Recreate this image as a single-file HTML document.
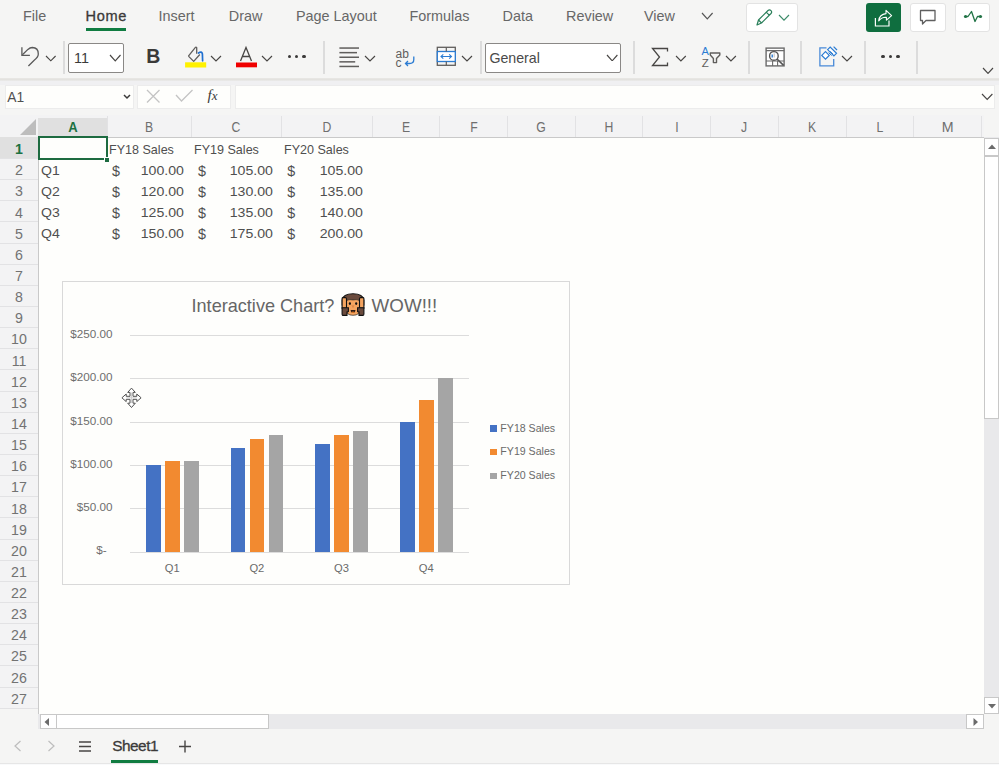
<!DOCTYPE html><html><head><meta charset="utf-8"><style>
html,body{margin:0;padding:0;width:999px;height:765px;overflow:hidden;background:#f5f5f4;font-family:"Liberation Sans", sans-serif;}
.t{position:absolute;white-space:nowrap;}
.r{position:absolute;box-sizing:border-box;}
</style></head><body>
<div class="t" style="left:23.09px;top:8.70px;font-size:14.4px;line-height:14.4px;color:#676767;font-weight:normal;">File</div>
<div class="t" style="left:158.49px;top:8.70px;font-size:14.4px;line-height:14.4px;color:#676767;font-weight:normal;">Insert</div>
<div class="t" style="left:228.79px;top:8.70px;font-size:14.4px;line-height:14.4px;color:#676767;font-weight:normal;">Draw</div>
<div class="t" style="left:295.99px;top:8.70px;font-size:14.4px;line-height:14.4px;color:#676767;font-weight:normal;">Page Layout</div>
<div class="t" style="left:409.39px;top:8.70px;font-size:14.4px;line-height:14.4px;color:#676767;font-weight:normal;">Formulas</div>
<div class="t" style="left:502.59px;top:8.70px;font-size:14.4px;line-height:14.4px;color:#676767;font-weight:normal;">Data</div>
<div class="t" style="left:566.09px;top:8.70px;font-size:14.4px;line-height:14.4px;color:#676767;font-weight:normal;">Review</div>
<div class="t" style="left:643.99px;top:8.70px;font-size:14.4px;line-height:14.4px;color:#676767;font-weight:normal;">View</div>
<div class="t" style="left:85.58px;top:8.66px;font-size:14.6px;line-height:14.6px;color:#3b3a39;font-weight:normal;-webkit-text-stroke:0.3px #3b3a39;letter-spacing:0.6px;">Home</div>
<div class="r" style="left:86px;top:28px;width:40px;height:3px;background:#107c41;"></div>
<svg class="r" style="left:701.4px;top:12.2px" width="12.6" height="8" viewBox="0 0 12.6 8"><path d="M1 1 L6.3 7 L11.6 1" fill="none" stroke="#555" stroke-width="1.15"/></svg>
<div class="r" style="left:746px;top:3px;width:52px;height:29px;background:#fff;border:1px solid #e3e3e3;border-radius:3px;"></div>
<svg class="r" style="left:754px;top:8px" width="20" height="20" viewBox="0 0 20 20"><path d="M3 17 L4.5 12 L14 2.5 Q15.5 1.2 17 2.6 Q18.3 4 17 5.5 L7.5 15 Z M4.5 12 L7.5 15 M12.3 4.2 L15.4 7.3" fill="none" stroke="#2a7f5a" stroke-width="1.2" stroke-linejoin="round"/></svg>
<svg class="r" style="left:777.8px;top:14px" width="12" height="7.2" viewBox="0 0 12 7.2"><path d="M1 1 L6.0 6.2 L11 1" fill="none" stroke="#3d8c6a" stroke-width="1.15"/></svg>
<div class="r" style="left:866px;top:3px;width:35px;height:29px;background:#0f6e3f;border-radius:3px;"></div>
<svg class="r" style="left:873px;top:8px" width="20" height="20" viewBox="0 0 20 20"><path d="M2.4 10 V18 H16 V12.5" fill="none" stroke="#fff" stroke-width="1.2"/><path d="M5.7 12.8 Q6.5 6.2 13 5.6 V2.3 L18.6 7.6 L13.4 12.2 V9.2 Q8.5 9 5.7 12.8 Z" fill="none" stroke="#fff" stroke-width="1.1" stroke-linejoin="round"/></svg>
<div class="r" style="left:910px;top:3px;width:36px;height:29px;background:#fff;border:1px solid #e3e3e3;border-radius:3px;"></div>
<svg class="r" style="left:919px;top:9px" width="18" height="17" viewBox="0 0 18 17"><path d="M1.5 1.5 H16 V11.5 H7 L3.5 15 V11.5 H1.5 Z" fill="none" stroke="#5f5f5f" stroke-width="1.3" stroke-linejoin="round"/></svg>
<div class="r" style="left:955px;top:3px;width:35px;height:29px;background:#fff;border:1px solid #e3e3e3;border-radius:3px;"></div>
<svg class="r" style="left:963px;top:10px" width="20" height="13" viewBox="0 0 20 13"><path d="M2 6.5 H5 L8.5 1.5 L12 11.5 L14.5 6.5 H18" fill="none" stroke="#217346" stroke-width="1.3" stroke-linejoin="round"/><circle cx="2.5" cy="6.5" r="1.6" fill="#217346"/><circle cx="17.5" cy="6.5" r="1.6" fill="#217346"/></svg>
<svg class="r" style="left:19px;top:45px" width="22" height="23" viewBox="0 0 22 23"><path d="M2.9 2.2 V10.4 H10.9" fill="none" stroke="#5a5a5a" stroke-width="1.3"/><path d="M3.4 9.7 L8.9 4.4 Q11 2.5 13.3 2.5 Q19.3 2.7 19.3 8.9 Q19.3 12 15.2 15.2 L9.4 21" fill="none" stroke="#5a5a5a" stroke-width="1.3"/></svg>
<svg class="r" style="left:44.7px;top:55px" width="11.6" height="6.8" viewBox="0 0 11.6 6.8"><path d="M1 1 L5.8 5.8 L10.6 1" fill="none" stroke="#484644" stroke-width="1.15"/></svg>
<div class="r" style="left:63px;top:41px;width:1.5px;height:33px;background:#dcdcdc;"></div>
<div class="r" style="left:322.5px;top:41px;width:2px;height:33px;background:#dcdcdc;"></div>
<div class="r" style="left:480px;top:41px;width:1.5px;height:33px;background:#dcdcdc;"></div>
<div class="r" style="left:633px;top:41px;width:1.5px;height:33px;background:#dcdcdc;"></div>
<div class="r" style="left:748px;top:41px;width:1.5px;height:33px;background:#dcdcdc;"></div>
<div class="r" style="left:800px;top:41px;width:1.5px;height:33px;background:#dcdcdc;"></div>
<div class="r" style="left:864px;top:41px;width:1.5px;height:33px;background:#dcdcdc;"></div>
<div class="r" style="left:916px;top:41px;width:1.5px;height:33px;background:#dcdcdc;"></div>
<div class="r" style="left:68px;top:43px;width:56px;height:30px;background:#fff;border:1px solid #8a8886;border-radius:2px;"></div>
<div class="t" style="left:73.99px;top:50.80px;font-size:14.4px;line-height:14.4px;color:#3b3a39;font-weight:normal;">11</div>
<svg class="r" style="left:108.7px;top:53.5px" width="12.5" height="8" viewBox="0 0 12.5 8"><path d="M1 1 L6.25 7 L11.5 1" fill="none" stroke="#484644" stroke-width="1.15"/></svg>
<div class="t" style="left:146.23px;top:47.28px;font-size:19.5px;line-height:19.5px;color:#3b3a39;font-weight:bold;">B</div>
<svg class="r" style="left:182px;top:42px" width="26" height="28" viewBox="0 0 26 28"><path d="M6.4 14.1 L13.2 5.6 Q14 4.6 14.7 5.6 L14.7 11.8 M6.4 14.1 L11.7 19.4 L17.8 12.5" fill="none" stroke="#605e5c" stroke-width="1.3" stroke-linejoin="round"/><path d="M16.5 11 Q19.8 8.8 20.4 12 L20.6 18.8" fill="none" stroke="#1f6fd0" stroke-width="1.7" stroke-linecap="round"/><rect x="3.1" y="20.3" width="21.1" height="5.2" fill="#fff100"/></svg>
<svg class="r" style="left:210.3px;top:54.9px" width="12" height="6.9" viewBox="0 0 12 6.9"><path d="M1 1 L6.0 5.9 L11 1" fill="none" stroke="#484644" stroke-width="1.15"/></svg>
<svg class="r" style="left:234px;top:45px" width="25" height="24" viewBox="0 0 25 24"><path d="M6.5 16 L12 2.5 L17.5 16 M8.3 11.5 H15.7" fill="none" stroke="#484644" stroke-width="1.3"/><rect x="2" y="17.5" width="21" height="4.8" fill="#f00000"/></svg>
<svg class="r" style="left:261px;top:54.9px" width="12" height="6.9" viewBox="0 0 12 6.9"><path d="M1 1 L6.0 5.9 L11 1" fill="none" stroke="#484644" stroke-width="1.15"/></svg>
<div class="r" style="left:287.9px;top:55px;width:3.2px;height:3.2px;background:#3b3a39;border-radius:50%;"></div>
<div class="r" style="left:295.2px;top:55px;width:3.2px;height:3.2px;background:#3b3a39;border-radius:50%;"></div>
<div class="r" style="left:302.4px;top:55px;width:3.2px;height:3.2px;background:#3b3a39;border-radius:50%;"></div>
<svg class="r" style="left:338px;top:46px" width="24" height="22" viewBox="0 0 24 22"><rect x="1.4" y="1.3" width="19.6" height="1.5" fill="#605e5c"/><rect x="1.4" y="5.9" width="17.6" height="1.5" fill="#605e5c"/><rect x="1.4" y="10.5" width="19.6" height="1.5" fill="#605e5c"/><rect x="1.4" y="15.1" width="15.8" height="1.5" fill="#605e5c"/><rect x="1.4" y="19.7" width="19.6" height="1.5" fill="#605e5c"/></svg>
<svg class="r" style="left:363.8px;top:54.9px" width="12" height="6.9" viewBox="0 0 12 6.9"><path d="M1 1 L6.0 5.9 L11 1" fill="none" stroke="#484644" stroke-width="1.15"/></svg>
<svg class="r" style="left:394px;top:46px" width="24" height="24" viewBox="0 0 24 24"><text x="1.6" y="11.5" font-family="Liberation Sans" font-size="12" fill="#605e5c">ab</text><text x="1.6" y="21" font-family="Liberation Sans" font-size="12" fill="#605e5c">c</text><path d="M19.8 10.5 V13.5 Q19.8 17.5 15.5 17.5 H11.5 M14 15 L11.5 17.5 L14 20" fill="none" stroke="#2b7cd3" stroke-width="1.3"/></svg>
<svg class="r" style="left:436px;top:46px" width="22" height="21" viewBox="0 0 22 21"><rect x="1.3" y="1.3" width="18" height="18" fill="none" stroke="#605e5c" stroke-width="1.3"/><rect x="1.3" y="5.5" width="18" height="10" fill="#fff" stroke="#2b7cd3" stroke-width="1.3"/><path d="M5 10.5 H15.5 M7.3 8.3 L5 10.5 L7.3 12.7 M13.2 8.3 L15.5 10.5 L13.2 12.7" fill="none" stroke="#2b7cd3" stroke-width="1.1"/><path d="M10.3 1.3 V5.5 M10.3 15.5 V19.3" stroke="#605e5c" stroke-width="1.2"/></svg>
<svg class="r" style="left:461.2px;top:54.9px" width="12" height="6.9" viewBox="0 0 12 6.9"><path d="M1 1 L6.0 5.9 L11 1" fill="none" stroke="#484644" stroke-width="1.15"/></svg>
<div class="r" style="left:485px;top:43px;width:136px;height:30px;background:#fff;border:1px solid #8a8886;border-radius:2px;"></div>
<div class="t" style="left:489.41px;top:50.73px;font-size:14.2px;line-height:14.2px;color:#4a4a4a;font-weight:normal;">General</div>
<svg class="r" style="left:605.6px;top:53.6px" width="12.4" height="7.8" viewBox="0 0 12.4 7.8"><path d="M1 1 L6.2 6.8 L11.4 1" fill="none" stroke="#484644" stroke-width="1.15"/></svg>
<svg class="r" style="left:650px;top:47px" width="20" height="20" viewBox="0 0 20 20"><path d="M17.5 4.5 V1.5 H2.5 L9.5 10 L2.5 18.5 H17.5 V15.5" fill="none" stroke="#484644" stroke-width="1.3" stroke-linejoin="miter"/></svg>
<svg class="r" style="left:674.8px;top:54.9px" width="11.8" height="6.9" viewBox="0 0 11.8 6.9"><path d="M1 1 L5.9 5.9 L10.8 1" fill="none" stroke="#484644" stroke-width="1.15"/></svg>
<svg class="r" style="left:696px;top:42px" width="28" height="28" viewBox="0 0 28 28"><text x="5.6" y="13.2" font-family="Liberation Sans" font-size="11" fill="#2b7cd3">A</text><text x="5.8" y="24.7" font-family="Liberation Sans" font-size="11.5" fill="#605e5c">Z</text><path d="M14.3 11 H23.8 V13 L20.5 16.5 V20.6 H17.4 V16.5 L14.3 13 Z" fill="none" stroke="#605e5c" stroke-width="1.4" stroke-linejoin="round"/></svg>
<svg class="r" style="left:725.2px;top:54.9px" width="11.9" height="6.9" viewBox="0 0 11.9 6.9"><path d="M1 1 L5.95 5.9 L10.9 1" fill="none" stroke="#484644" stroke-width="1.15"/></svg>
<svg class="r" style="left:760px;top:42px" width="28" height="28" viewBox="0 0 28 28"><rect x="6.1" y="6.1" width="18" height="17.8" fill="#fff" stroke="#6b6b6b" stroke-width="1.4"/><path d="M6 8.6 H24.2 M6 19 H24.2 M12.6 19 V24 M17.6 19 V24" stroke="#6b6b6b" stroke-width="1.1"/><circle cx="13.9" cy="13.9" r="4.3" fill="#fff" stroke="#555" stroke-width="1.4"/><rect x="11.5" y="12.5" width="1.4" height="3" fill="#2b7cd3"/><rect x="13.6" y="11.3" width="1.2" height="4.2" fill="#c8c8c8"/><path d="M17 17 L23.6 23.3" stroke="#555" stroke-width="1.6"/></svg>
<svg class="r" style="left:814px;top:42px" width="28" height="28" viewBox="0 0 28 28"><path d="M12.5 5.9 H5.9 V23.9 H19.7 V17" fill="none" stroke="#4a8ad8" stroke-width="1.3"/><path d="M7.8 13.4 L11.5 9.7 L15.2 13.4 L11.5 17.1 Z" fill="#fff" stroke="#2b7cd3" stroke-width="1.2" transform="rotate(0)"/><path d="M13.6 7.6 L16.2 5 L22.5 11.3 L19.9 13.9 Z" fill="#fff" stroke="#2b7cd3" stroke-width="1.2"/><path d="M14.6 10.6 L17.6 13.6 M16 9.2 L19 12.2" stroke="#2b7cd3" stroke-width="1"/><path d="M19.6 4.6 L23 8" stroke="#2b7cd3" stroke-width="1.2"/></svg>
<svg class="r" style="left:841.2px;top:54.9px" width="12" height="6.9" viewBox="0 0 12 6.9"><path d="M1 1 L6.0 5.9 L11 1" fill="none" stroke="#484644" stroke-width="1.15"/></svg>
<div class="r" style="left:881.4px;top:55px;width:3.2px;height:3.2px;background:#3b3a39;border-radius:50%;"></div>
<div class="r" style="left:888.9px;top:55px;width:3.2px;height:3.2px;background:#3b3a39;border-radius:50%;"></div>
<div class="r" style="left:896.4px;top:55px;width:3.2px;height:3.2px;background:#3b3a39;border-radius:50%;"></div>
<svg class="r" style="left:981.6px;top:66.6px" width="12" height="7.4" viewBox="0 0 12 7.4"><path d="M1 1 L6.0 6.4 L11 1" fill="none" stroke="#484644" stroke-width="1.15"/></svg>
<div class="r" style="left:0px;top:78px;width:999px;height:3px;background:linear-gradient(#e9e8e5,#e3e2df 50%,#ebebea);"></div>
<div class="r" style="left:0px;top:81px;width:999px;height:4px;background:#f0f0f2;"></div>
<div class="r" style="left:0px;top:85px;width:999px;height:30px;background:#f5f5f4;"></div>
<div class="r" style="left:5px;top:84.5px;width:129px;height:24px;background:#fefefc;border:1px solid #ececec;"></div>
<div class="t" style="left:7.33px;top:90.79px;font-size:13.8px;line-height:13.8px;color:#505050;font-weight:normal;">A1</div>
<svg class="r" style="left:122.5px;top:93.8px" width="8" height="6" viewBox="0 0 8 6"><path d="M1 1 L4 4 L7 1" fill="none" stroke="#3b3a39" stroke-width="1.5"/></svg>
<div class="r" style="left:137px;top:84.5px;width:94px;height:24px;background:#fefefc;border:1px solid #ececec;"></div>
<svg class="r" style="left:146px;top:89px" width="15" height="15" viewBox="0 0 15 15"><path d="M1 1 L13.5 13.5 M13.5 1 L1 13.5" stroke="#c4c4c4" stroke-width="1.3"/></svg>
<svg class="r" style="left:174.5px;top:89px" width="19" height="14" viewBox="0 0 19 14"><path d="M1 6 L6.5 12 L17.5 1" fill="none" stroke="#c4c4c4" stroke-width="1.3"/></svg>
<div class="t" style="left:207.5px;top:86px;font-family:'Liberation Serif',serif;font-style:italic;font-size:15px;line-height:18px;color:#3b3a39;">f<span style="font-size:13px">x</span></div>
<div class="r" style="left:235px;top:84.5px;width:760px;height:24px;background:#fefefc;border:1px solid #ececec;"></div>
<svg class="r" style="left:980.8px;top:93.3px" width="12.4" height="7.5" viewBox="0 0 12.4 7.5"><path d="M1 1 L6.2 6.5 L11.4 1" fill="none" stroke="#484644" stroke-width="1.15"/></svg>
<div class="r" style="left:0px;top:115px;width:984px;height:22.4px;background:#f3f3f4;"></div>
<div class="r" style="left:38px;top:117.5px;width:69px;height:19.9px;background:#e0e0e0;"></div>
<div class="r" style="left:106.5px;top:116px;width:1px;height:21.4px;background:#e2e2e4;"></div>
<div class="r" style="left:190.5px;top:116px;width:1px;height:21.4px;background:#e2e2e4;"></div>
<div class="r" style="left:281.1px;top:116px;width:1px;height:21.4px;background:#e2e2e4;"></div>
<div class="r" style="left:371.5px;top:116px;width:1px;height:21.4px;background:#e2e2e4;"></div>
<div class="r" style="left:439.22px;top:116px;width:1px;height:21.4px;background:#e2e2e4;"></div>
<div class="r" style="left:506.94px;top:116px;width:1px;height:21.4px;background:#e2e2e4;"></div>
<div class="r" style="left:574.66px;top:116px;width:1px;height:21.4px;background:#e2e2e4;"></div>
<div class="r" style="left:642.38px;top:116px;width:1px;height:21.4px;background:#e2e2e4;"></div>
<div class="r" style="left:710.1px;top:116px;width:1px;height:21.4px;background:#e2e2e4;"></div>
<div class="r" style="left:777.8199999999999px;top:116px;width:1px;height:21.4px;background:#e2e2e4;"></div>
<div class="r" style="left:845.54px;top:116px;width:1px;height:21.4px;background:#e2e2e4;"></div>
<div class="r" style="left:913.26px;top:116px;width:1px;height:21.4px;background:#e2e2e4;"></div>
<div class="r" style="left:980.98px;top:116px;width:1px;height:21.4px;background:#e2e2e4;"></div>
<div class="t" style="left:-27.50px;width:200px;text-align:center;top:119.93px;font-size:14.2px;line-height:14.2px;color:#1b7142;font-weight:bold;transform:scaleX(0.92);">A</div>
<div class="t" style="left:49.00px;width:200px;text-align:center;top:119.93px;font-size:14.2px;line-height:14.2px;color:#6f6f6f;font-weight:normal;transform:scaleX(0.86);">B</div>
<div class="t" style="left:136.30px;width:200px;text-align:center;top:119.93px;font-size:14.2px;line-height:14.2px;color:#6f6f6f;font-weight:normal;transform:scaleX(0.86);">C</div>
<div class="t" style="left:226.80px;width:200px;text-align:center;top:119.93px;font-size:14.2px;line-height:14.2px;color:#6f6f6f;font-weight:normal;transform:scaleX(0.86);">D</div>
<div class="t" style="left:305.86px;width:200px;text-align:center;top:119.93px;font-size:14.2px;line-height:14.2px;color:#6f6f6f;font-weight:normal;transform:scaleX(0.86);">E</div>
<div class="t" style="left:373.58px;width:200px;text-align:center;top:119.93px;font-size:14.2px;line-height:14.2px;color:#6f6f6f;font-weight:normal;transform:scaleX(0.86);">F</div>
<div class="t" style="left:441.30px;width:200px;text-align:center;top:119.93px;font-size:14.2px;line-height:14.2px;color:#6f6f6f;font-weight:normal;transform:scaleX(0.86);">G</div>
<div class="t" style="left:509.02px;width:200px;text-align:center;top:119.93px;font-size:14.2px;line-height:14.2px;color:#6f6f6f;font-weight:normal;transform:scaleX(0.86);">H</div>
<div class="t" style="left:576.74px;width:200px;text-align:center;top:119.93px;font-size:14.2px;line-height:14.2px;color:#6f6f6f;font-weight:normal;transform:scaleX(0.86);">I</div>
<div class="t" style="left:644.46px;width:200px;text-align:center;top:119.93px;font-size:14.2px;line-height:14.2px;color:#6f6f6f;font-weight:normal;transform:scaleX(0.86);">J</div>
<div class="t" style="left:712.18px;width:200px;text-align:center;top:119.93px;font-size:14.2px;line-height:14.2px;color:#6f6f6f;font-weight:normal;transform:scaleX(0.86);">K</div>
<div class="t" style="left:779.90px;width:200px;text-align:center;top:119.93px;font-size:14.2px;line-height:14.2px;color:#6f6f6f;font-weight:normal;transform:scaleX(0.86);">L</div>
<div class="t" style="left:847.62px;width:200px;text-align:center;top:119.93px;font-size:14.2px;line-height:14.2px;color:#6f6f6f;font-weight:normal;transform:scaleX(1.0);">M</div>
<svg class="r" style="left:20px;top:118.8px" width="16" height="16" viewBox="0 0 16 16"><path d="M16 0 V16 H0 Z" fill="#bdbdbd"/></svg>
<div class="r" style="left:38px;top:136.6px;width:946px;height:1.2px;background:#c9c9c9;"></div>
<div class="r" style="left:38.5px;top:137.8px;width:945.5px;height:576.5px;background:#fefefc;"></div>
<div class="r" style="left:37.6px;top:137.4px;width:1px;height:577px;background:#c9c9c9;"></div>
<div class="r" style="left:0px;top:137.4px;width:37.6px;height:571px;background:#f3f3f4;"></div>
<div class="r" style="left:0px;top:137.4px;width:37.6px;height:21.14px;background:#e0e0e0;"></div>
<div class="r" style="left:0px;top:158.04px;width:37.6px;height:1px;background:#e2e2e4;"></div>
<div class="t" style="left:-81.00px;width:200px;text-align:center;top:142.03px;font-size:14.2px;line-height:14.2px;color:#1b7142;font-weight:bold;">1</div>
<div class="r" style="left:0px;top:179.18px;width:37.6px;height:1px;background:#e2e2e4;"></div>
<div class="t" style="left:-81.00px;width:200px;text-align:center;top:163.27px;font-size:14.2px;line-height:14.2px;color:#727272;font-weight:normal;">2</div>
<div class="r" style="left:0px;top:200.32px;width:37.6px;height:1px;background:#e2e2e4;"></div>
<div class="t" style="left:-81.00px;width:200px;text-align:center;top:184.41px;font-size:14.2px;line-height:14.2px;color:#727272;font-weight:normal;">3</div>
<div class="r" style="left:0px;top:221.46px;width:37.6px;height:1px;background:#e2e2e4;"></div>
<div class="t" style="left:-81.00px;width:200px;text-align:center;top:205.55px;font-size:14.2px;line-height:14.2px;color:#727272;font-weight:normal;">4</div>
<div class="r" style="left:0px;top:242.6px;width:37.6px;height:1px;background:#e2e2e4;"></div>
<div class="t" style="left:-81.00px;width:200px;text-align:center;top:226.69px;font-size:14.2px;line-height:14.2px;color:#727272;font-weight:normal;">5</div>
<div class="r" style="left:0px;top:263.74px;width:37.6px;height:1px;background:#e2e2e4;"></div>
<div class="t" style="left:-81.00px;width:200px;text-align:center;top:247.83px;font-size:14.2px;line-height:14.2px;color:#727272;font-weight:normal;">6</div>
<div class="r" style="left:0px;top:284.88px;width:37.6px;height:1px;background:#e2e2e4;"></div>
<div class="t" style="left:-81.00px;width:200px;text-align:center;top:268.97px;font-size:14.2px;line-height:14.2px;color:#727272;font-weight:normal;">7</div>
<div class="r" style="left:0px;top:306.02px;width:37.6px;height:1px;background:#e2e2e4;"></div>
<div class="t" style="left:-81.00px;width:200px;text-align:center;top:290.11px;font-size:14.2px;line-height:14.2px;color:#727272;font-weight:normal;">8</div>
<div class="r" style="left:0px;top:327.16px;width:37.6px;height:1px;background:#e2e2e4;"></div>
<div class="t" style="left:-81.00px;width:200px;text-align:center;top:311.25px;font-size:14.2px;line-height:14.2px;color:#727272;font-weight:normal;">9</div>
<div class="r" style="left:0px;top:348.3px;width:37.6px;height:1px;background:#e2e2e4;"></div>
<div class="t" style="left:-81.00px;width:200px;text-align:center;top:332.39px;font-size:14.2px;line-height:14.2px;color:#727272;font-weight:normal;">10</div>
<div class="r" style="left:0px;top:369.44px;width:37.6px;height:1px;background:#e2e2e4;"></div>
<div class="t" style="left:-81.00px;width:200px;text-align:center;top:353.53px;font-size:14.2px;line-height:14.2px;color:#727272;font-weight:normal;">11</div>
<div class="r" style="left:0px;top:390.58px;width:37.6px;height:1px;background:#e2e2e4;"></div>
<div class="t" style="left:-81.00px;width:200px;text-align:center;top:374.67px;font-size:14.2px;line-height:14.2px;color:#727272;font-weight:normal;">12</div>
<div class="r" style="left:0px;top:411.72px;width:37.6px;height:1px;background:#e2e2e4;"></div>
<div class="t" style="left:-81.00px;width:200px;text-align:center;top:395.81px;font-size:14.2px;line-height:14.2px;color:#727272;font-weight:normal;">13</div>
<div class="r" style="left:0px;top:432.86px;width:37.6px;height:1px;background:#e2e2e4;"></div>
<div class="t" style="left:-81.00px;width:200px;text-align:center;top:416.95px;font-size:14.2px;line-height:14.2px;color:#727272;font-weight:normal;">14</div>
<div class="r" style="left:0px;top:454.0px;width:37.6px;height:1px;background:#e2e2e4;"></div>
<div class="t" style="left:-81.00px;width:200px;text-align:center;top:438.09px;font-size:14.2px;line-height:14.2px;color:#727272;font-weight:normal;">15</div>
<div class="r" style="left:0px;top:475.14px;width:37.6px;height:1px;background:#e2e2e4;"></div>
<div class="t" style="left:-81.00px;width:200px;text-align:center;top:459.23px;font-size:14.2px;line-height:14.2px;color:#727272;font-weight:normal;">16</div>
<div class="r" style="left:0px;top:496.28px;width:37.6px;height:1px;background:#e2e2e4;"></div>
<div class="t" style="left:-81.00px;width:200px;text-align:center;top:480.37px;font-size:14.2px;line-height:14.2px;color:#727272;font-weight:normal;">17</div>
<div class="r" style="left:0px;top:517.42px;width:37.6px;height:1px;background:#e2e2e4;"></div>
<div class="t" style="left:-81.00px;width:200px;text-align:center;top:501.51px;font-size:14.2px;line-height:14.2px;color:#727272;font-weight:normal;">18</div>
<div class="r" style="left:0px;top:538.56px;width:37.6px;height:1px;background:#e2e2e4;"></div>
<div class="t" style="left:-81.00px;width:200px;text-align:center;top:522.65px;font-size:14.2px;line-height:14.2px;color:#727272;font-weight:normal;">19</div>
<div class="r" style="left:0px;top:559.7px;width:37.6px;height:1px;background:#e2e2e4;"></div>
<div class="t" style="left:-81.00px;width:200px;text-align:center;top:543.79px;font-size:14.2px;line-height:14.2px;color:#727272;font-weight:normal;">20</div>
<div class="r" style="left:0px;top:580.84px;width:37.6px;height:1px;background:#e2e2e4;"></div>
<div class="t" style="left:-81.00px;width:200px;text-align:center;top:564.93px;font-size:14.2px;line-height:14.2px;color:#727272;font-weight:normal;">21</div>
<div class="r" style="left:0px;top:601.98px;width:37.6px;height:1px;background:#e2e2e4;"></div>
<div class="t" style="left:-81.00px;width:200px;text-align:center;top:586.07px;font-size:14.2px;line-height:14.2px;color:#727272;font-weight:normal;">22</div>
<div class="r" style="left:0px;top:623.12px;width:37.6px;height:1px;background:#e2e2e4;"></div>
<div class="t" style="left:-81.00px;width:200px;text-align:center;top:607.21px;font-size:14.2px;line-height:14.2px;color:#727272;font-weight:normal;">23</div>
<div class="r" style="left:0px;top:644.26px;width:37.6px;height:1px;background:#e2e2e4;"></div>
<div class="t" style="left:-81.00px;width:200px;text-align:center;top:628.35px;font-size:14.2px;line-height:14.2px;color:#727272;font-weight:normal;">24</div>
<div class="r" style="left:0px;top:665.4px;width:37.6px;height:1px;background:#e2e2e4;"></div>
<div class="t" style="left:-81.00px;width:200px;text-align:center;top:649.49px;font-size:14.2px;line-height:14.2px;color:#727272;font-weight:normal;">25</div>
<div class="r" style="left:0px;top:686.54px;width:37.6px;height:1px;background:#e2e2e4;"></div>
<div class="t" style="left:-81.00px;width:200px;text-align:center;top:670.63px;font-size:14.2px;line-height:14.2px;color:#727272;font-weight:normal;">26</div>
<div class="r" style="left:0px;top:707.68px;width:37.6px;height:1px;background:#e2e2e4;"></div>
<div class="t" style="left:-81.00px;width:200px;text-align:center;top:691.77px;font-size:14.2px;line-height:14.2px;color:#727272;font-weight:normal;">27</div>
<div class="r" style="left:37.5px;top:136.4px;width:70px;height:23.6px;border:2px solid #1d6b40;"></div>
<div class="r" style="left:103.8px;top:156.8px;width:6px;height:6px;background:#1d6b40;border:1px solid #fdfdfc;"></div>
<div class="t" style="left:108.86px;top:142.64px;font-size:13.5px;line-height:13.5px;color:#4f4f4f;font-weight:normal;transform:scaleX(0.93);transform-origin:0 0;">FY18 Sales</div>
<div class="t" style="left:194.36px;top:142.64px;font-size:13.5px;line-height:13.5px;color:#4f4f4f;font-weight:normal;transform:scaleX(0.93);transform-origin:0 0;">FY19 Sales</div>
<div class="t" style="left:284.06px;top:142.64px;font-size:13.5px;line-height:13.5px;color:#4f4f4f;font-weight:normal;transform:scaleX(0.93);transform-origin:0 0;">FY20 Sales</div>
<div class="t" style="left:41.26px;top:163.78px;font-size:13.5px;line-height:13.5px;color:#4f4f4f;font-weight:normal;transform:scaleX(1.04);transform-origin:0 0;">Q1</div>
<div class="t" style="left:112.00px;top:164.05px;font-size:14.3px;line-height:14.3px;color:#4f4f4f;font-weight:normal;">$</div>
<div class="t" style="right:814.96px;top:163.80px;font-size:13.4px;line-height:13.4px;color:#4f4f4f;transform:scaleX(1.055);transform-origin:100% 0;">100.00</div>
<div class="t" style="left:198.10px;top:164.05px;font-size:14.3px;line-height:14.3px;color:#4f4f4f;font-weight:normal;">$</div>
<div class="t" style="right:725.86px;top:163.80px;font-size:13.4px;line-height:13.4px;color:#4f4f4f;transform:scaleX(1.055);transform-origin:100% 0;">105.00</div>
<div class="t" style="left:287.20px;top:164.05px;font-size:14.3px;line-height:14.3px;color:#4f4f4f;font-weight:normal;">$</div>
<div class="t" style="right:635.56px;top:163.80px;font-size:13.4px;line-height:13.4px;color:#4f4f4f;transform:scaleX(1.055);transform-origin:100% 0;">105.00</div>
<div class="t" style="left:41.26px;top:184.92px;font-size:13.5px;line-height:13.5px;color:#4f4f4f;font-weight:normal;transform:scaleX(1.04);transform-origin:0 0;">Q2</div>
<div class="t" style="left:112.00px;top:185.19px;font-size:14.3px;line-height:14.3px;color:#4f4f4f;font-weight:normal;">$</div>
<div class="t" style="right:814.96px;top:184.94px;font-size:13.4px;line-height:13.4px;color:#4f4f4f;transform:scaleX(1.055);transform-origin:100% 0;">120.00</div>
<div class="t" style="left:198.10px;top:185.19px;font-size:14.3px;line-height:14.3px;color:#4f4f4f;font-weight:normal;">$</div>
<div class="t" style="right:725.86px;top:184.94px;font-size:13.4px;line-height:13.4px;color:#4f4f4f;transform:scaleX(1.055);transform-origin:100% 0;">130.00</div>
<div class="t" style="left:287.20px;top:185.19px;font-size:14.3px;line-height:14.3px;color:#4f4f4f;font-weight:normal;">$</div>
<div class="t" style="right:635.56px;top:184.94px;font-size:13.4px;line-height:13.4px;color:#4f4f4f;transform:scaleX(1.055);transform-origin:100% 0;">135.00</div>
<div class="t" style="left:41.26px;top:206.06px;font-size:13.5px;line-height:13.5px;color:#4f4f4f;font-weight:normal;transform:scaleX(1.04);transform-origin:0 0;">Q3</div>
<div class="t" style="left:112.00px;top:206.33px;font-size:14.3px;line-height:14.3px;color:#4f4f4f;font-weight:normal;">$</div>
<div class="t" style="right:814.96px;top:206.08px;font-size:13.4px;line-height:13.4px;color:#4f4f4f;transform:scaleX(1.055);transform-origin:100% 0;">125.00</div>
<div class="t" style="left:198.10px;top:206.33px;font-size:14.3px;line-height:14.3px;color:#4f4f4f;font-weight:normal;">$</div>
<div class="t" style="right:725.86px;top:206.08px;font-size:13.4px;line-height:13.4px;color:#4f4f4f;transform:scaleX(1.055);transform-origin:100% 0;">135.00</div>
<div class="t" style="left:287.20px;top:206.33px;font-size:14.3px;line-height:14.3px;color:#4f4f4f;font-weight:normal;">$</div>
<div class="t" style="right:635.56px;top:206.08px;font-size:13.4px;line-height:13.4px;color:#4f4f4f;transform:scaleX(1.055);transform-origin:100% 0;">140.00</div>
<div class="t" style="left:41.26px;top:227.20px;font-size:13.5px;line-height:13.5px;color:#4f4f4f;font-weight:normal;transform:scaleX(1.04);transform-origin:0 0;">Q4</div>
<div class="t" style="left:112.00px;top:227.47px;font-size:14.3px;line-height:14.3px;color:#4f4f4f;font-weight:normal;">$</div>
<div class="t" style="right:814.96px;top:227.22px;font-size:13.4px;line-height:13.4px;color:#4f4f4f;transform:scaleX(1.055);transform-origin:100% 0;">150.00</div>
<div class="t" style="left:198.10px;top:227.47px;font-size:14.3px;line-height:14.3px;color:#4f4f4f;font-weight:normal;">$</div>
<div class="t" style="right:725.86px;top:227.22px;font-size:13.4px;line-height:13.4px;color:#4f4f4f;transform:scaleX(1.055);transform-origin:100% 0;">175.00</div>
<div class="t" style="left:287.20px;top:227.47px;font-size:14.3px;line-height:14.3px;color:#4f4f4f;font-weight:normal;">$</div>
<div class="t" style="right:635.56px;top:227.22px;font-size:13.4px;line-height:13.4px;color:#4f4f4f;transform:scaleX(1.055);transform-origin:100% 0;">200.00</div>
<div class="r" style="left:61.5px;top:280.8px;width:508.3px;height:304.2px;background:#fefefc;border:1px solid #d9d9d9;"></div>
<div class="t" style="left:191.53px;top:296.90px;font-size:18.1px;line-height:18.1px;color:#666666;font-weight:normal;">Interactive Chart?</div>
<div class="t" style="left:371.58px;top:296.79px;font-size:18.8px;line-height:18.8px;color:#666666;font-weight:normal;">WOW!!!</div>
<svg class="r" style="left:341px;top:293px" width="24" height="24" viewBox="0 0 24 24">
<path d="M1.2 7 Q2 0.8 12 0.8 Q22 0.8 22.8 7 L22.8 12 H1.2 Z" fill="#6a4a3c" stroke="#111" stroke-width="1.1"/>
<path d="M5.2 9 Q5.5 6.2 9 6.6 Q12 7.2 15 6.6 Q18.5 6.2 18.8 9 L19 16 Q19 22.3 12 22.3 Q5 22.3 5 16 Z" fill="#f4a460" stroke="#222" stroke-width="0.7"/>
<ellipse cx="8.9" cy="10.6" rx="1.1" ry="1.4" fill="#111"/><ellipse cx="15.2" cy="10.6" rx="1.1" ry="1.4" fill="#111"/>
<path d="M11 12 L12 14.5 L13 12" fill="none" stroke="#d9823f" stroke-width="0.8"/>
<path d="M9.6 17 H14.5 Q14 20 12 20 Q10 20 9.6 17 Z" fill="#2a1a14"/><path d="M10.6 19 Q12 18 13.5 19 Q12.8 20 12 20 Q11 20 10.6 19 Z" fill="#f07c22"/>
<path d="M1.1 5.5 Q1.1 4.6 2.2 4.6 H4.4 Q5.5 4.6 5.5 5.8 V15.2 H1.1 Z" fill="#f4a460" stroke="#111" stroke-width="1.1"/>
<path d="M22.9 5.5 Q22.9 4.6 21.8 4.6 H19.6 Q18.5 4.6 18.5 5.8 V15.2 H22.9 Z" fill="#f4a460" stroke="#111" stroke-width="1.1"/>
<path d="M1.1 14.8 H7.4 V18.5 L6 19 V22.4 H2.2 Q1.1 22.4 1.1 21 Z" fill="#6a4a3c" stroke="#111" stroke-width="1.1"/>
<path d="M22.9 14.8 H16.6 V18.5 L18 19 V22.4 H21.8 Q22.9 22.4 22.9 21 Z" fill="#6a4a3c" stroke="#111" stroke-width="1.1"/>
</svg>
<div class="r" style="left:130px;top:552px;width:339px;height:1px;background:#dcdcdc;"></div>
<div class="t" style="right:892.33px;top:544.43px;font-size:11.7px;line-height:11.7px;color:#6e6e6e;">$-</div>
<div class="r" style="left:130px;top:508px;width:339px;height:1px;background:#dcdcdc;"></div>
<div class="t" style="right:886.53px;top:501.13px;font-size:11.7px;line-height:11.7px;color:#6e6e6e;">$50.00</div>
<div class="r" style="left:130px;top:465px;width:339px;height:1px;background:#dcdcdc;"></div>
<div class="t" style="right:886.53px;top:457.53px;font-size:11.7px;line-height:11.7px;color:#6e6e6e;">$100.00</div>
<div class="r" style="left:130px;top:422px;width:339px;height:1px;background:#dcdcdc;"></div>
<div class="t" style="right:886.53px;top:414.73px;font-size:11.7px;line-height:11.7px;color:#6e6e6e;">$150.00</div>
<div class="r" style="left:130px;top:378px;width:339px;height:1px;background:#dcdcdc;"></div>
<div class="t" style="right:886.53px;top:371.33px;font-size:11.7px;line-height:11.7px;color:#6e6e6e;">$200.00</div>
<div class="r" style="left:130px;top:335px;width:339px;height:1px;background:#dcdcdc;"></div>
<div class="t" style="right:886.53px;top:328.13px;font-size:11.7px;line-height:11.7px;color:#6e6e6e;">$250.00</div>
<div class="r" style="left:145.9px;top:465.35px;width:14.7px;height:87.05px;background:#4472c4;"></div>
<div class="r" style="left:164.95px;top:461.0px;width:14.7px;height:91.4px;background:#f28a30;"></div>
<div class="r" style="left:184.0px;top:461.0px;width:14.7px;height:91.4px;background:#a5a5a5;"></div>
<div class="t" style="left:72.20px;width:200px;text-align:center;top:563.01px;font-size:11.2px;line-height:11.2px;color:#6a6a6a;font-weight:normal;">Q1</div>
<div class="r" style="left:230.58px;top:447.94px;width:14.7px;height:104.46px;background:#4472c4;"></div>
<div class="r" style="left:249.63px;top:439.23px;width:14.7px;height:113.17px;background:#f28a30;"></div>
<div class="r" style="left:268.68px;top:434.88px;width:14.7px;height:117.52px;background:#a5a5a5;"></div>
<div class="t" style="left:156.88px;width:200px;text-align:center;top:563.01px;font-size:11.2px;line-height:11.2px;color:#6a6a6a;font-weight:normal;">Q2</div>
<div class="r" style="left:315.26px;top:443.59px;width:14.7px;height:108.81px;background:#4472c4;"></div>
<div class="r" style="left:334.31px;top:434.88px;width:14.7px;height:117.52px;background:#f28a30;"></div>
<div class="r" style="left:353.36px;top:430.53px;width:14.7px;height:121.87px;background:#a5a5a5;"></div>
<div class="t" style="left:241.56px;width:200px;text-align:center;top:563.01px;font-size:11.2px;line-height:11.2px;color:#6a6a6a;font-weight:normal;">Q3</div>
<div class="r" style="left:399.94px;top:421.82px;width:14.7px;height:130.58px;background:#4472c4;"></div>
<div class="r" style="left:418.99px;top:400.06px;width:14.7px;height:152.34px;background:#f28a30;"></div>
<div class="r" style="left:438.04px;top:378.3px;width:14.7px;height:174.1px;background:#a5a5a5;"></div>
<div class="t" style="left:326.24px;width:200px;text-align:center;top:563.01px;font-size:11.2px;line-height:11.2px;color:#6a6a6a;font-weight:normal;">Q4</div>
<div class="r" style="left:490.3px;top:425.1px;width:7.2px;height:6.5px;background:#4472c4;"></div>
<div class="t" style="left:500.36px;top:422.60px;font-size:10.6px;line-height:10.6px;color:#6a6a6a;font-weight:normal;">FY18 Sales</div>
<div class="r" style="left:490.3px;top:448.95px;width:7.2px;height:6.5px;background:#f28a30;"></div>
<div class="t" style="left:500.36px;top:446.45px;font-size:10.6px;line-height:10.6px;color:#6a6a6a;font-weight:normal;">FY19 Sales</div>
<div class="r" style="left:490.3px;top:472.8px;width:7.2px;height:6.5px;background:#a5a5a5;"></div>
<div class="t" style="left:500.36px;top:470.30px;font-size:10.6px;line-height:10.6px;color:#6a6a6a;font-weight:normal;">FY20 Sales</div>
<svg class="r" style="left:120px;top:386px" width="23" height="24" viewBox="0 0 23 24"><path d="M11.5 2.1 L15.3 6.4 H13 V10.3 H16.8 V8 L21.1 11.8 L16.8 15.6 V13.3 H13 V17.2 H15.3 L11.5 21.5 L7.7 17.2 H10 V13.3 H6.2 V15.6 L1.9 11.8 L6.2 8 V10.3 H10 V6.4 H7.7 Z" fill="#fff" stroke="#505050" stroke-width="1" stroke-linejoin="miter"/><path d="M11.5 6.6 V17 M6.4 11.8 H16.6" stroke="#d0d0d0" stroke-width="1"/></svg>
<div class="r" style="left:984px;top:137.4px;width:15px;height:577px;background:#e9e9eb;"></div>
<div class="r" style="left:984px;top:138.2px;width:15px;height:17.5px;background:#fff;border:1px solid #c8c8c8;"></div>
<svg class="r" style="left:987.5px;top:143.5px" width="8" height="5" viewBox="0 0 8 5"><path d="M0 5 L4 0.5 L8 5 Z" fill="#6b6b6b"/></svg>
<div class="r" style="left:984px;top:155.5px;width:15px;height:263px;background:#fff;border:1px solid #c8c8c8;"></div>
<div class="r" style="left:984px;top:696.5px;width:15px;height:17.5px;background:#fff;border:1px solid #c8c8c8;"></div>
<svg class="r" style="left:987.5px;top:703.5px" width="8" height="5" viewBox="0 0 8 5"><path d="M0 0 L8 0 L4 4.5 Z" fill="#6b6b6b"/></svg>
<div class="r" style="left:38px;top:714px;width:946px;height:15px;background:#e9e9eb;"></div>
<div class="r" style="left:39.5px;top:714px;width:17px;height:15px;background:#fff;border:1px solid #c8c8c8;"></div>
<svg class="r" style="left:44px;top:717.5px" width="6" height="8" viewBox="0 0 6 8"><path d="M5 0 L5 8 L0.5 4 Z" fill="#6b6b6b"/></svg>
<div class="r" style="left:56px;top:714px;width:212.5px;height:15px;background:#fff;border:1px solid #c8c8c8;"></div>
<div class="r" style="left:966.3px;top:714px;width:17.5px;height:15px;background:#fff;border:1px solid #c8c8c8;"></div>
<svg class="r" style="left:972.8px;top:717.8px" width="6" height="8" viewBox="0 0 6 8"><path d="M0.5 0 L0.5 8 L5 4 Z" fill="#6b6b6b"/></svg>
<div class="r" style="left:984px;top:714px;width:15px;height:15px;background:#f5f5f4;"></div>
<div class="r" style="left:0px;top:729px;width:999px;height:36px;background:#f5f5f4;"></div>
<div class="r" style="left:0px;top:762.5px;width:999px;height:1px;background:#e6e6e6;"></div>
<div class="r" style="left:0px;top:763.5px;width:999px;height:1.5px;background:#f9fafb;"></div>
<svg class="r" style="left:12.5px;top:740px" width="9" height="12" viewBox="0 0 9 12"><path d="M7.5 1 L2 6 L7.5 11" fill="none" stroke="#bdbdbd" stroke-width="1.2"/></svg>
<svg class="r" style="left:47px;top:740px" width="9" height="12" viewBox="0 0 9 12"><path d="M1.5 1 L7 6 L1.5 11" fill="none" stroke="#bdbdbd" stroke-width="1.2"/></svg>
<svg class="r" style="left:78px;top:740px" width="14" height="13" viewBox="0 0 14 13"><path d="M1 2 H13 M1 6.5 H13 M1 11 H13" stroke="#484644" stroke-width="1.4"/></svg>
<div class="t" style="left:112.22px;top:737.94px;font-size:15.4px;line-height:15.4px;color:#3b3a39;font-weight:normal;-webkit-text-stroke:0.3px #3b3a39;letter-spacing:-0.5px;">Sheet1</div>
<div class="r" style="left:111.2px;top:760px;width:47px;height:3px;background:#107c41;"></div>
<svg class="r" style="left:178px;top:740px" width="14" height="13" viewBox="0 0 14 13"><path d="M7 0.5 V12.5 M1 6.5 H13" stroke="#484644" stroke-width="1.4"/></svg>
</body></html>
